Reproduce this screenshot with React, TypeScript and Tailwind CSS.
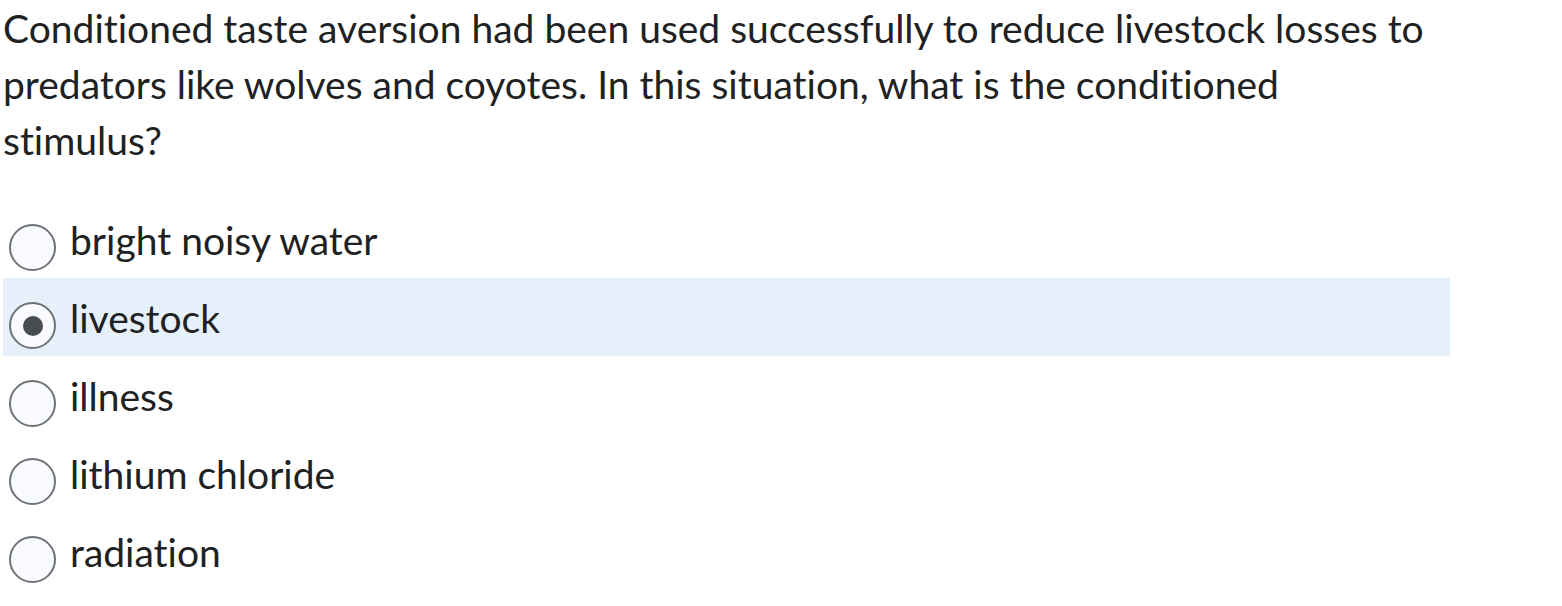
import React from "react";

const options = [
  { label: "bright noisy water", selected: false },
  { label: "livestock", selected: true },
  { label: "illness", selected: false },
  { label: "lithium chloride", selected: false },
  { label: "radiation", selected: false },
];

function Radio({ selected }: { selected: boolean }) {
  return (
    <div className="w-[47px] h-[47px] shrink-0 rounded-full border-2 border-[#6e7378] bg-[#f9fbff] flex items-center justify-center">
      {selected && <div className="w-[20px] h-[20px] rounded-full bg-[#494c4e]" />}
    </div>
  );
}

export default function App() {
  return (
    <div
      className="w-[1562px] h-[606px] bg-white text-[#202122] overflow-hidden [font-variant-ligatures:none]"
      style={{ fontFamily: "Lato, 'Noto Sans', sans-serif" }}
    >
      <div className="w-[1447px] ml-[3px]">
        <p className="w-[1430px] text-[39px] leading-[56px]">
          Conditioned taste aversion had been used successfully to reduce livestock losses to predators like wolves and coyotes. In this situation, what is the conditioned stimulus?
        </p>
        <div className="mt-[32px] flex flex-col">
          {options.map((o) => (
            <div
              key={o.label}
              className={`h-[78px] flex items-start gap-[14px] pl-[6px] ${o.selected ? "bg-[#e6f0fa]" : ""}`}
            >
              <div className="mt-[24px]">
                <Radio selected={o.selected} />
              </div>
              <span className="text-[39px] leading-[56px] mt-[12px]">{o.label}</span>
            </div>
          ))}
        </div>
      </div>
    </div>
  );
}
